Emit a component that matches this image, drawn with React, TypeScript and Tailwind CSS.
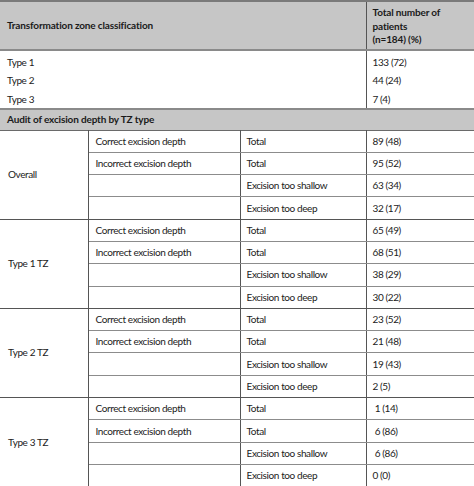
import React from 'react';

const groups = [
  {
    label: 'Overall',
    rows: [
      ['Correct excision depth', 'Total', '89 (48)'],
      ['Incorrect excision depth', 'Total', '95 (52)'],
      ['', 'Excision too shallow', '63 (34)'],
      ['', 'Excision too deep', '32 (17)'],
    ],
  },
  {
    label: 'Type 1 TZ',
    rows: [
      ['Correct excision depth', 'Total', '65 (49)'],
      ['Incorrect excision depth', 'Total', '68 (51)'],
      ['', 'Excision too shallow', '38 (29)'],
      ['', 'Excision too deep', '30 (22)'],
    ],
  },
  {
    label: 'Type 2 TZ',
    rows: [
      ['Correct excision depth', 'Total', '23 (52)'],
      ['Incorrect excision depth', 'Total', '21 (48)'],
      ['', 'Excision too shallow', '19 (43)'],
      ['', 'Excision too deep', '2 (5)'],
    ],
  },
  {
    label: 'Type 3 TZ',
    rows: [
      ['Correct excision depth', 'Total', '\u00a01 (14)'],
      ['Incorrect excision depth', 'Total', '\u00a06 (86)'],
      ['', 'Excision too shallow', '\u00a06 (86)'],
      ['', 'Excision too deep', '0 (0)'],
    ],
  },
];

const summary = [
  ['Type 1', '133 (72)'],
  ['Type 2', '44 (24)'],
  ['Type 3', '7 (4)'],
];

export default function App() {
  return (
    <div className="w-[474px] h-[486px] overflow-hidden bg-white font-['Lato',sans-serif] text-[10px] tracking-[-0.4px] text-[#222]">
      <table className="w-[474px] table-fixed border-collapse">
        <colgroup>
          <col className="w-[88px]" />
          <col className="w-[152px]" />
          <col className="w-[126px]" />
          <col className="w-[108px]" />
        </colgroup>
        <tbody>
          {/* header */}
          <tr className="h-[49px] bg-[#c6c6c6] border-t-2 border-t-[#7a7a7a] border-b-2 border-b-[#8a8a8a] font-bold tracking-[-0.15px] text-[#1a1a1a]">
            <td colSpan={3} className="px-[7px] align-middle">Transformation zone classification</td>
            <td className="px-[6px] pt-[2px] leading-[13.5px] border-l border-l-[#555] border-r border-r-[#888]">
              Total number of
              <br />
              patients
              <br />
              (n=184) (%)
            </td>
          </tr>
          {summary.map(([a, b], i) => (
            <tr key={a} className={i === 0 ? 'h-[21px]' : 'h-[19px]'}>
              <td colSpan={3} className={`px-[7px] ${i === 0 ? 'pt-[3px]' : ''}`}>{a}</td>
              <td className={`px-[6px] border-l border-l-[#555] border-r border-r-[#888] ${i === 0 ? 'pt-[3px]' : ''}`}>{b}</td>
            </tr>
          ))}
          <tr className="h-[21px] bg-[#c6c6c6] border-t-2 border-t-[#8a8a8a] border-b border-b-[#6a6a6a] font-bold tracking-[-0.15px] text-[#1a1a1a]">
            <td colSpan={4} className="px-[7px] border-r border-r-[#888]">Audit of excision depth by TZ type</td>
          </tr>
          {/* groups */}
          {groups.map((g) =>
            g.rows.map((r, i) => (
              <tr key={g.label + i} className="h-[22.3px]">
                {i === 0 && (
                  <td rowSpan={4} className="px-[8px] align-middle border-b border-b-[#555] border-r border-r-[#555]">
                    {g.label}
                  </td>
                )}
                <td className={`px-[7px] border-r border-r-[#555] border-b ${i === 3 ? 'border-b-[#555]' : 'border-b-[#8c8c8c]'}`}>{r[0]}</td>
                <td className={`px-[6px] border-r border-r-[#555] border-b ${i === 3 ? 'border-b-[#555]' : 'border-b-[#8c8c8c]'}`}>{r[1]}</td>
                <td className={`px-[6px] border-r border-r-[#888] border-b ${i === 3 ? 'border-b-[#555]' : 'border-b-[#8c8c8c]'}`}>{r[2]}</td>
              </tr>
            ))
          )}
        </tbody>
      </table>
    </div>
  );
}
